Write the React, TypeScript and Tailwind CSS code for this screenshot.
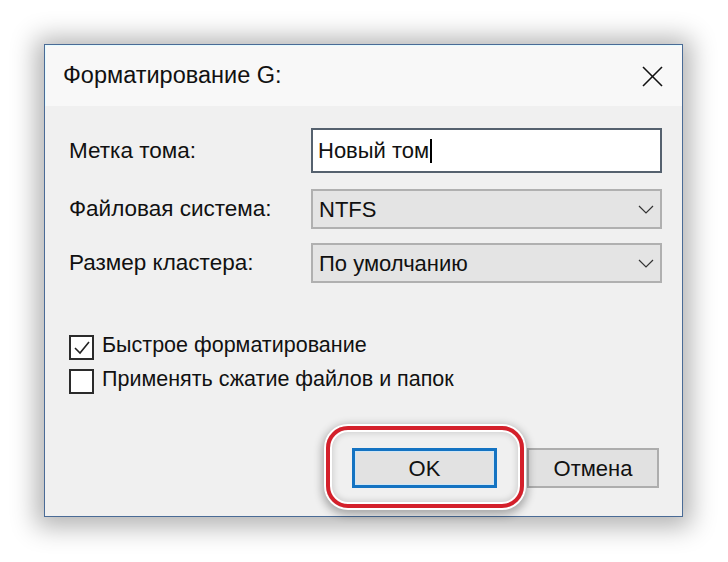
const font = { fontFamily: '"Liberation Sans", "Noto Sans", sans-serif' };

function Chevron() {
  return (
    <svg viewBox="0 0 16 9" className="h-[9px] w-[16px]">
      <polyline points="1,1 8,8 15,1" fill="none" stroke="#333" strokeWidth="1.2" />
    </svg>
  );
}

function Select({ value }: { value: string }) {
  return (
    <div className="flex h-[40px] flex-1 items-center justify-between border-2 border-[#b0b0b0] bg-[#e4e4e4] pl-[6px] pr-[6px]">
      <span className="text-[22px] text-[#111]">{value}</span>
      <Chevron />
    </div>
  );
}

function Checkbox({ checked, label }: { checked: boolean; label: string }) {
  return (
    <div className="flex h-[25px] items-center gap-[8px]">
      <div className="flex h-[25px] w-[25px] items-center justify-center border-2 border-[#2b2b2b] bg-white">
        {checked && (
          <svg viewBox="0 0 20 20" className="h-[20px] w-[20px]">
            <polyline points="3,10 8,15 17,4" fill="none" stroke="#222" strokeWidth="1.6" />
          </svg>
        )}
      </div>
      <span className="-mt-[4px] text-[21.5px] text-[#111]">{label}</span>
    </div>
  );
}

export default function App() {
  return (
    <div className="h-[562px] w-[728px] bg-white pl-[44px] pt-[44px]" style={font}>
      <div className="flex h-[473px] w-[639px] flex-col border border-[#4a6b96] shadow-[0_2px_24px_8px_rgba(0,0,0,0.3)]">
        <div className="flex h-[61px] items-center justify-between border-l border-t border-[#e6fbff] bg-[#f8f8f8] pl-[17px] pr-[19px]">
          <span className="text-[23.5px] text-[#111]">Форматирование G:</span>
          <svg viewBox="0 0 21 21" className="h-[21px] w-[21px]">
            <line x1="1" y1="1" x2="20" y2="20" stroke="#111" strokeWidth="1.6" />
            <line x1="20" y1="1" x2="1" y2="20" stroke="#111" strokeWidth="1.6" />
          </svg>
        </div>

        <div className="flex flex-1 flex-col bg-[#f0f0f0] pl-[24px] pr-[20px] pt-[22px]">
          <div className="flex h-[45px] items-center">
            <span className="w-[242px] text-[22.5px] text-[#111]">Метка тома:</span>
            <div className="flex h-[45px] flex-1 items-center border-2 border-[#55616e] bg-white pl-[5px]">
              <span className="text-[22px] text-[#111]">Новый том</span>
              <span className="ml-[1px] h-[24px] w-[2px] bg-black" />
            </div>
          </div>

          <div className="mt-[16px] flex items-center">
            <span className="w-[242px] text-[22.5px] text-[#111]">Файловая система:</span>
            <Select value="NTFS" />
          </div>

          <div className="mt-[14px] flex items-center">
            <span className="w-[242px] text-[22.5px] text-[#111]">Размер кластера:</span>
            <Select value="По умолчанию" />
          </div>

          <div className="mt-[52px] flex flex-col gap-[9px]">
            <Checkbox checked label="Быстрое форматирование" />
            <Checkbox checked={false} label="Применять сжатие файлов и папок" />
          </div>

          <div className="mt-[54px] flex justify-end gap-[30px] pr-[3px]">
            <div className="relative">
              <button className="flex h-[40px] w-[145px] items-center justify-center border-[3px] border-[#1473c2] bg-[#e2e2e2] text-[22px] text-[#111] shadow-[inset_0_0_0_1px_#cfe6f6]">
                OK
              </button>
              <div className="pointer-events-none absolute -bottom-[20px] -left-[26px] -right-[27px] -top-[22px] rounded-[22px] border-4 border-[#d4202b] shadow-[0_0_0_2px_#fff,0_3px_8px_4px_rgba(0,0,0,0.3),inset_0_0_0_2px_#fff,inset_0_0_6px_3px_rgba(0,0,0,0.15)]" />
            </div>
            <button className="flex h-[40px] w-[132px] items-center justify-center border-2 border-[#adadad] bg-[#e1e1e1] text-[22px] text-[#111]">
              Отмена
            </button>
          </div>
        </div>
      </div>
    </div>
  );
}
